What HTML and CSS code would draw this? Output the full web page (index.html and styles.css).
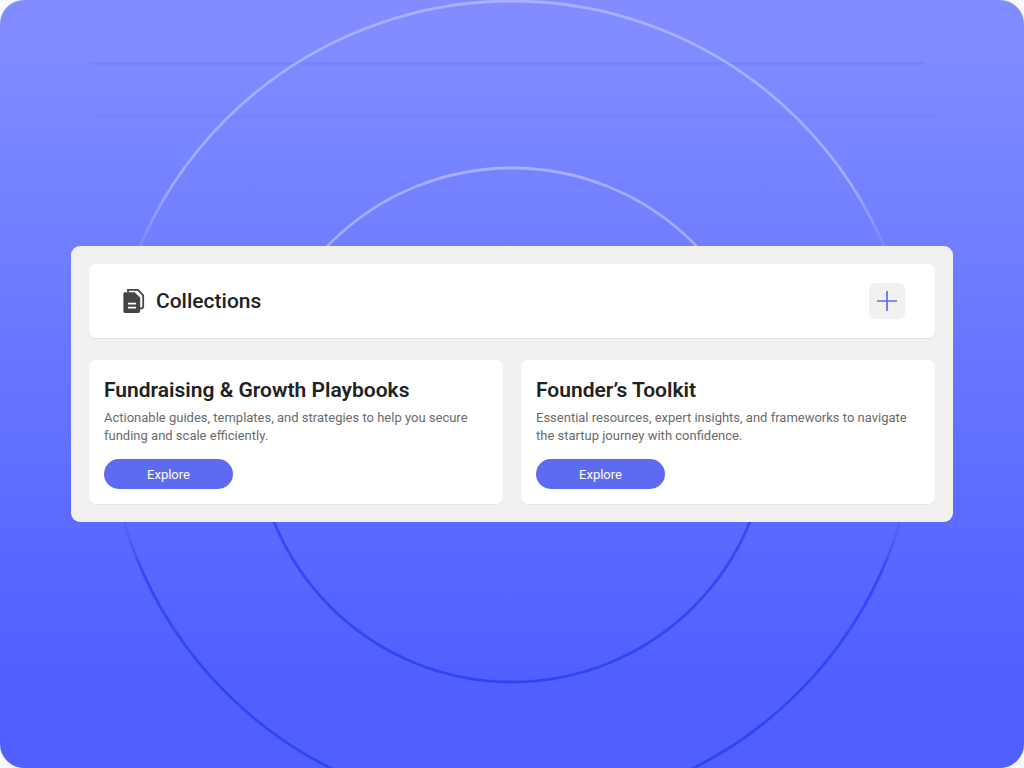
FILE: index.html
```html
<!DOCTYPE html>
<html lang="en">
<head>
  <meta charset="UTF-8">
  <meta name="viewport" content="width=device-width, initial-scale=1.0">
  <title>Collections</title>
  <link rel="stylesheet" href="styles.css">
</head>
<body>

  <div class="page">
    <!-- background rings and lines -->
    <svg class="backdrop" viewBox="0 0 1024 768" preserveAspectRatio="xMidYMid slice" aria-hidden="true">
      <defs>
        <linearGradient id="outerRing" x1="0" y1="0" x2="0" y2="768" gradientUnits="userSpaceOnUse">
          <stop offset="0" stop-color="#a8b0ff"/>
          <stop offset="0.24" stop-color="#a2abff"/>
          <stop offset="0.31" stop-color="#808cff"/>
          <stop offset="0.69" stop-color="#5162ff"/>
          <stop offset="0.75" stop-color="#3347f5"/>
          <stop offset="1" stop-color="#3044f5"/>
        </linearGradient>
        <linearGradient id="innerRing" x1="0" y1="168" x2="0" y2="682" gradientUnits="userSpaceOnUse">
          <stop offset="0" stop-color="#a6aeff"/>
          <stop offset="0.15" stop-color="#a0a9ff"/>
          <stop offset="0.65" stop-color="#3449f7"/>
          <stop offset="1" stop-color="#3044f5"/>
        </linearGradient>
      </defs>
      <path d="M90 63.5H925" stroke="#7583f8" stroke-width="2.5"/>
      <path d="M97 116H934" stroke="#7684fa" stroke-width="2.5"/>
      <circle cx="512" cy="406" r="405" fill="none" stroke="url(#outerRing)" stroke-width="2.8"/>
      <circle cx="512" cy="425" r="257" fill="none" stroke="url(#innerRing)" stroke-width="2.8"/>
    </svg>

    <main class="panel">
      <header class="panel-header">
        <svg class="header-icon" width="22" height="26" viewBox="0 0 22 26" aria-hidden="true">
          <path d="M5 4.5V1.8H15L20.2 7.4V18.2Q20.2 20.4 18 20.4H17" fill="none" stroke="#444" stroke-width="1.8"/>
          <path d="M2 4.2H11.6L17.2 9.8V22.8Q17.2 25 15 25H2Q.4 25 .4 23V6.2Q.4 4.2 2 4.2Z" fill="#444"/>
          <path d="M5 15.6H13M5 19.6H13" stroke="#fff" stroke-width="1.6"/>
        </svg>
        <h1 class="header-title">Collections</h1>
        <button type="button" class="add-btn" aria-label="Add collection">
          <svg width="20" height="20" viewBox="0 0 20 20" aria-hidden="true">
            <path d="M10 0V20M0 10H20" stroke="#5c6bf2" stroke-width="1.7"/>
          </svg>
        </button>
      </header>

      <div class="cards">
        <section class="card">
          <h2 class="card-title">Fundraising &amp; Growth Playbooks</h2>
          <p class="card-text">Actionable guides, templates, and strategies to help you secure funding and scale efficiently.</p>
          <button type="button" class="explore-btn">Explore</button>
        </section>
        <section class="card">
          <h2 class="card-title">Founder’s Toolkit</h2>
          <p class="card-text">Essential resources, expert insights, and frameworks to navigate the startup journey with confidence.</p>
          <button type="button" class="explore-btn">Explore</button>
        </section>
      </div>
    </main>
  </div>

</body>
</html>
```
FILE: styles.css
```css
* {
  box-sizing: border-box;
}
body {
  margin: 0;
  background: #f8f9ff;
  font-family: Roboto, "Liberation Sans", sans-serif;
  color: #222;
}
.page {
  position: relative;
  display: flex;
  align-items: center;
  min-height: 100vh;
  padding: 24px 71px;
  border-radius: 24px;
  overflow: hidden;
  background: linear-gradient(#818dff 0%, #808cff 5%, #4f60ff 88%, #4f60ff 100%);
}
.backdrop {
  position: absolute;
  inset: 0;
  width: 100%;
  height: 100%;
}
.panel {
  position: relative;
  flex: 1;
  padding: 18px;
  border-radius: 9px;
  background: #f2f1f0;
}
.panel-header {
  display: flex;
  align-items: center;
  height: 74px;
  margin-bottom: 22px;
  padding: 0 30px 0 34px;
}
.panel-header,
.card {
  border-radius: 7px;
  background: #fff;
  box-shadow: 0 1px 1px rgba(0, 0, 0, 0.06);
}
.header-title {
  flex: 1;
  margin: 0 0 0 11px;
  font-size: 21px;
  line-height: 30px;
  font-weight: 500;
}
.add-btn {
  display: flex;
  align-items: center;
  justify-content: center;
  width: 36px;
  height: 36px;
  padding: 0;
  border: none;
  border-radius: 6px;
  background: #f2f1f0;
  cursor: pointer;
}
.cards {
  display: grid;
  grid-template-columns: repeat(auto-fit, minmax(300px, 1fr));
  gap: 18px;
}
.card {
  padding: 15px;
}
.card-title {
  margin: 0 0 4px;
  font-size: 21px;
  line-height: 30px;
  font-weight: 600;
}
.card-text {
  margin: 0 0 14px;
  font-size: 13px;
  line-height: 18px;
  color: #6b6b6b;
}
.explore-btn {
  display: block;
  width: 129px;
  height: 30px;
  padding: 0;
  border: none;
  border-radius: 15px;
  background: #5c6bf2;
  color: #fff;
  font-family: inherit;
  font-size: 13px;
  cursor: pointer;
}
```
